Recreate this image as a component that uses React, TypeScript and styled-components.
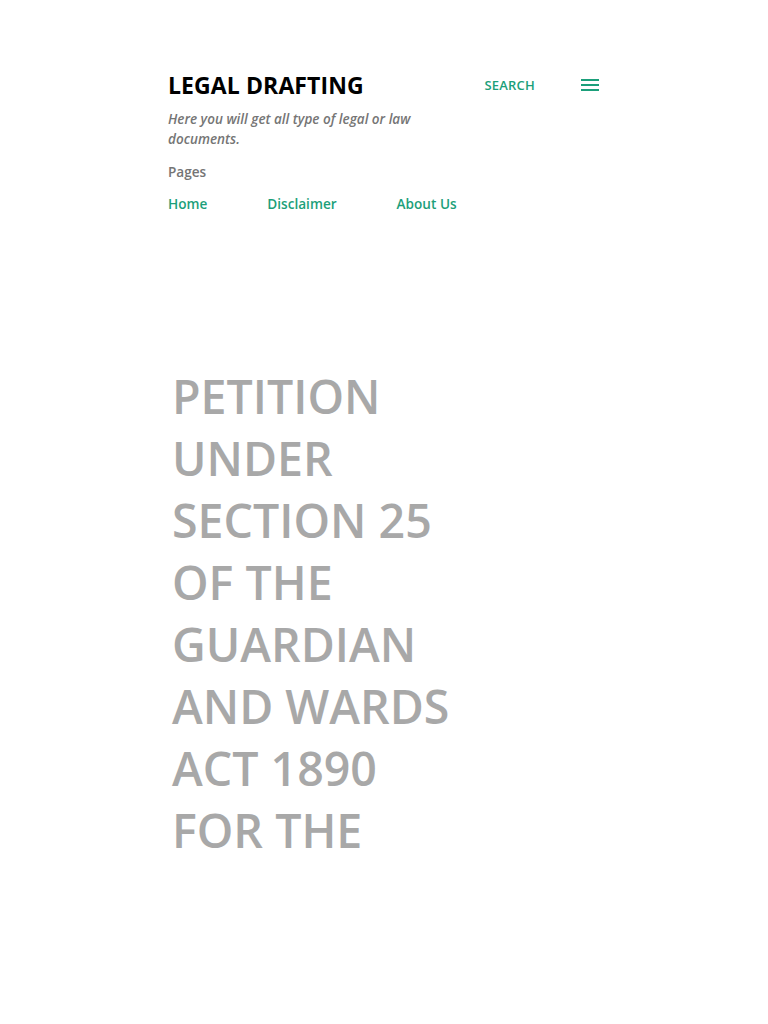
import styled, { createGlobalStyle } from 'styled-components';

const GlobalStyle = createGlobalStyle`
  html, body {
    margin: 0;
    padding: 0;
    background: #ffffff;
    font-family: "Open Sans", "Noto Sans", sans-serif;
  }
`;

const Page = styled.div`
  width: 432px;
  margin: 0 auto;
  padding-top: 68px;
`;

const Header = styled.header`
  display: flex;
  align-items: flex-start;
  justify-content: space-between;
`;

const Brand = styled.div`
  width: 300px;
`;

const Title = styled.h1`
  margin: 0;
  font-size: 23px;
  font-weight: 700;
  line-height: 34px;
  color: #000000;
  letter-spacing: 0.1px;
`;

const Tagline = styled.p`
  margin: 7px 0 0;
  font-size: 13.5px;
  font-style: italic;
  font-weight: 600;
  line-height: 20px;
  color: #757575;
`;

const Tools = styled.div`
  display: flex;
  align-items: center;
  gap: 46px;
  height: 34px;
  padding-right: 1px;
`;

const SearchLabel = styled.span`
  font-size: 13px;
  font-weight: 600;
  color: #1c9f7a;
  letter-spacing: 0.2px;
`;

const MenuButton = styled.button`
  border: 0;
  background: none;
  padding: 0;
  width: 18px;
  height: 12px;
  display: flex;
  flex-direction: column;
  justify-content: space-between;
  cursor: pointer;
`;

const MenuBar = styled.span`
  display: block;
  height: 2px;
  width: 18px;
  background: #1c9f7a;
`;

const PagesLabel = styled.div`
  margin-top: 13px;
  font-size: 13.6px;
  font-weight: 600;
  line-height: 20px;
  color: #757575;
`;

const Nav = styled.nav`
  display: flex;
  margin-top: 12px;
`;

const NavLink = styled.a`
  margin-right: 60px;
  font-size: 13.6px;
  font-weight: 600;
  line-height: 20px;
  color: #1c9f7a;
  text-decoration: none;
`;

const Article = styled.article`
  margin-top: 151px;
  padding-left: 4px;
  width: 292px;
`;

const Headline = styled.h2`
  margin: 0;
  font-size: 46.5px;
  font-weight: 600;
  line-height: 62px;
  color: #a8a8a8;
  text-transform: uppercase;
`;

export default function App() {
  return (
    <>
      <GlobalStyle />
      <Page>
        <Header>
          <Brand>
            <Title>LEGAL DRAFTING</Title>
            <Tagline>Here you will get all type of legal or law documents.</Tagline>
          </Brand>
          <Tools>
            <SearchLabel>SEARCH</SearchLabel>
            <MenuButton aria-label="Menu">
              <MenuBar />
              <MenuBar />
              <MenuBar />
            </MenuButton>
          </Tools>
        </Header>
        <PagesLabel>Pages</PagesLabel>
        <Nav>
          <NavLink href="#">Home</NavLink>
          <NavLink href="#">Disclaimer</NavLink>
          <NavLink href="#">About Us</NavLink>
        </Nav>
        <Article>
          <Headline>
            Petition under section 25 of the guardian and wards act 1890 for the
          </Headline>
        </Article>
      </Page>
    </>
  );
}
